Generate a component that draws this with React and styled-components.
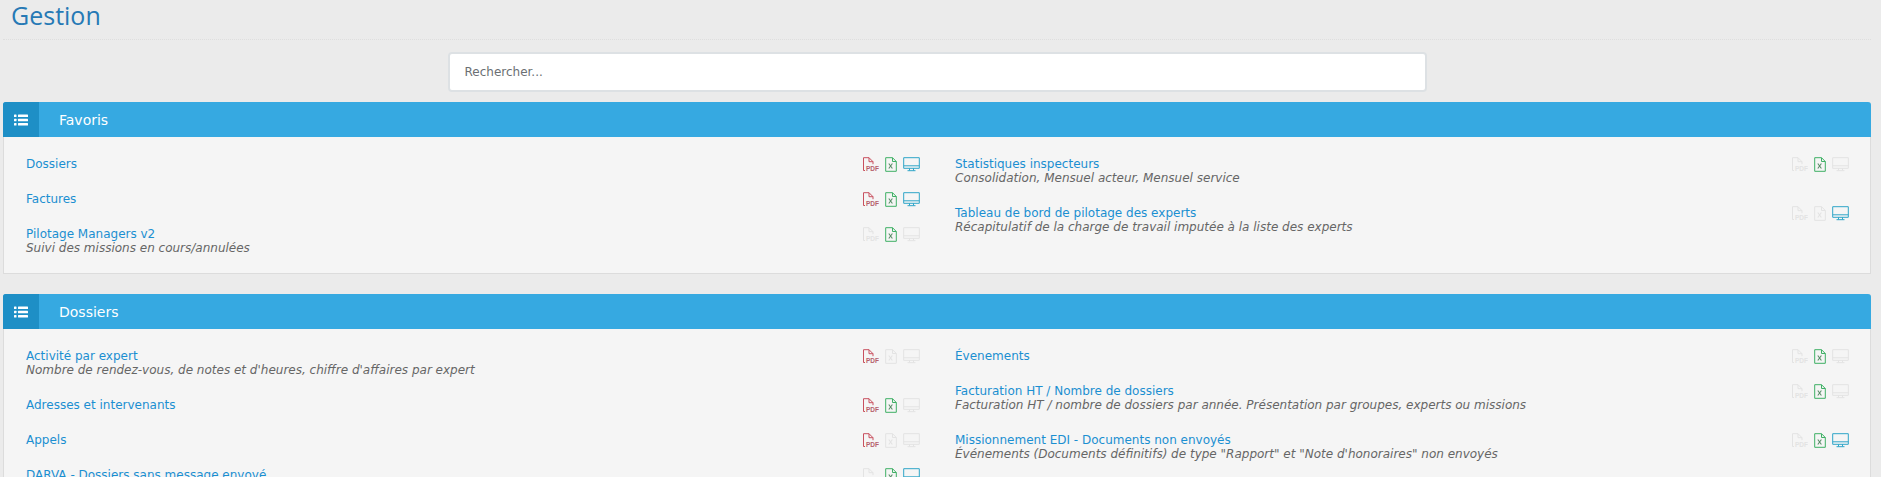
import styled, { createGlobalStyle } from "styled-components";

const GlobalStyle = createGlobalStyle`
  html, body {
    margin: 0;
    height: 477px;
    overflow: hidden;
    background: #ebebeb;
  }
  body {
    font-family: "DejaVu Sans", "Noto Sans", sans-serif;
  }
`;

const Page = styled.div`
  padding: 0 10px 0 3px;
`;

const PageTitle = styled.h1`
  margin: 0;
  padding: 0 0 0 8px;
  height: 39px;
  border-bottom: 1px dotted #dedede;
  font-family: "Open Sans", sans-serif;
  font-size: 25px;
  font-weight: 400;
  line-height: 30px;
  color: #2679b5;
`;

const SearchRow = styled.div`
  display: flex;
  justify-content: center;
  padding: 12px 0 10px;
`;

const SearchInput = styled.input`
  box-sizing: border-box;
  width: 979px;
  height: 40px;
  padding: 0 15px;
  background: #fff;
  border: 2px solid #dde1e4;
  border-radius: 4px;
  font-family: inherit;
  font-size: 12px;
  color: #555;

  &::placeholder {
    color: #6b6f73;
    opacity: 1;
  }
`;

const Panel = styled.section`
  margin-bottom: 20px;
  background: #f5f5f5;
  border: 1px solid #dcdcdc;
  border-top: none;
  border-radius: 3px 3px 0 0;
`;

const PanelHeader = styled.header`
  display: flex;
  align-items: center;
  height: 35px;
  margin: 0 -1px;
  background: #36a9e1;
  border-radius: 3px 3px 0 0;
  overflow: hidden;
  color: #fff;
  font-size: 14px;
`;

const HeaderIcon = styled.span`
  display: flex;
  align-items: center;
  justify-content: center;
  width: 36px;
  height: 100%;
  margin-right: 20px;
  background: #1e8fc6;
`;

const PanelBody = styled.div`
  display: grid;
  grid-template-columns: 894px 894px;
  column-gap: 35px;
  padding: 20px 0 0 22px;
`;

const Column = styled.div`
  display: flex;
  flex-direction: column;
  gap: 21px;
  padding-bottom: 18px;
`;

const Row = styled.div`
  display: flex;
  justify-content: space-between;
  align-items: flex-start;
`;

const RowText = styled.div`
  font-size: 12px;
  line-height: 14px;
`;

const RowLink = styled.a`
  display: block;
  color: #1b8fd1;
  text-decoration: none;
`;

const RowNote = styled.div`
  color: #666;
  font-style: italic;
`;

const Icons = styled.div`
  display: flex;
  align-items: flex-start;
  gap: 6px;
  height: 14px;
`;

const MUTED = "#e3e3e3";

const ListIcon = () => (
  <svg width="14" height="12" viewBox="0 0 14 12" fill="#fff">
    <rect x="0" y="0.5" width="2.5" height="2.5" rx="0.5" />
    <rect x="0" y="4.75" width="2.5" height="2.5" rx="0.5" />
    <rect x="0" y="9" width="2.5" height="2.5" rx="0.5" />
    <rect x="4" y="0.5" width="10" height="2.5" rx="0.5" />
    <rect x="4" y="4.75" width="10" height="2.5" rx="0.5" />
    <rect x="4" y="9" width="10" height="2.5" rx="0.5" />
  </svg>
);

const PdfIcon = ({ on }) => {
  const color = on ? "#c8505f" : MUTED;
  return (
    <svg width="17" height="15" viewBox="0 0 17 15" fill="none">
      <path
        d="M1.5 13.5V.7h5.5l4 4v2.5M7 .7v4h4M1.5 13.5h1.5"
        stroke={color}
        strokeWidth="1"
      />
      <text
        x="4"
        y="13.7"
        fontFamily="Liberation Sans, sans-serif"
        fontSize="6.5"
        fontWeight="700"
        fill={on ? "#b5606c" : MUTED}
      >
        PDF
      </text>
    </svg>
  );
};

const ExcelIcon = ({ on }) => {
  const color = on ? "#3fb065" : MUTED;
  return (
    <svg width="12" height="15" viewBox="0 0 12 15" fill="none">
      <path d="M.7.7h6.8l3.8 3.8v9.8H.7zM7.5.7v3.8h3.8" stroke={color} strokeWidth="1" />
      <path
        d="M3.8 6.5l3.6 5M7.4 6.5l-3.6 5"
        stroke={on ? "#5b8f6a" : MUTED}
        strokeWidth="1.1"
      />
    </svg>
  );
};

const ScreenIcon = ({ on }) => {
  const color = on ? "#2fa5c8" : MUTED;
  return (
    <svg width="17" height="15" viewBox="0 0 17 15" fill="none">
      <path
        d="M.7.7h15.6v10.6H.7zM.7 8.8h15.6M6.5 11.3v2.2M10.5 11.3v2.2M4.5 13.7h8"
        stroke={color}
        strokeWidth="1"
      />
    </svg>
  );
};

const sections = [
  {
    title: "Favoris",
    left: [
      { name: "Dossiers", icons: [1, 1, 1] },
      { name: "Factures", icons: [1, 1, 1] },
      { name: "Pilotage Managers v2", note: "Suivi des missions en cours/annulées", icons: [0, 1, 0] },
    ],
    right: [
      { name: "Statistiques inspecteurs", note: "Consolidation, Mensuel acteur, Mensuel service", icons: [0, 1, 0] },
      {
        name: "Tableau de bord de pilotage des experts",
        note: "Récapitulatif de la charge de travail imputée à la liste des experts",
        icons: [0, 0, 1],
      },
    ],
  },
  {
    title: "Dossiers",
    left: [
      {
        name: "Activité par expert",
        note: "Nombre de rendez-vous, de notes et d'heures, chiffre d'affaires par expert",
        icons: [1, 0, 0],
      },
      { name: "Adresses et intervenants", icons: [1, 1, 0] },
      { name: "Appels", icons: [1, 0, 0] },
      { name: "DARVA - Dossiers sans message envoyé", icons: [0, 1, 1] },
    ],
    right: [
      { name: "Évenements", icons: [0, 1, 0] },
      {
        name: "Facturation HT / Nombre de dossiers",
        note: "Facturation HT / nombre de dossiers par année. Présentation par groupes, experts ou missions",
        icons: [0, 1, 0],
      },
      {
        name: "Missionnement EDI - Documents non envoyés",
        note: 'Événements (Documents définitifs) de type "Rapport" et "Note d\'honoraires" non envoyés',
        icons: [0, 1, 1],
      },
    ],
  },
];

const ReportRow = ({ name, note, icons }) => (
  <Row>
    <RowText>
      <RowLink href="#">{name}</RowLink>
      {note && <RowNote>{note}</RowNote>}
    </RowText>
    <Icons>
      <PdfIcon on={icons[0]} />
      <ExcelIcon on={icons[1]} />
      <ScreenIcon on={icons[2]} />
    </Icons>
  </Row>
);

export default function App() {
  return (
    <Page>
      <GlobalStyle />
      <PageTitle>Gestion</PageTitle>
      <SearchRow>
        <SearchInput placeholder="Rechercher..." />
      </SearchRow>
      {sections.map((s) => (
        <Panel key={s.title}>
          <PanelHeader>
            <HeaderIcon>
              <ListIcon />
            </HeaderIcon>
            {s.title}
          </PanelHeader>
          <PanelBody>
            <Column>
              {s.left.map((r) => (
                <ReportRow key={r.name} {...r} />
              ))}
            </Column>
            <Column>
              {s.right.map((r) => (
                <ReportRow key={r.name} {...r} />
              ))}
            </Column>
          </PanelBody>
        </Panel>
      ))}
    </Page>
  );
}
